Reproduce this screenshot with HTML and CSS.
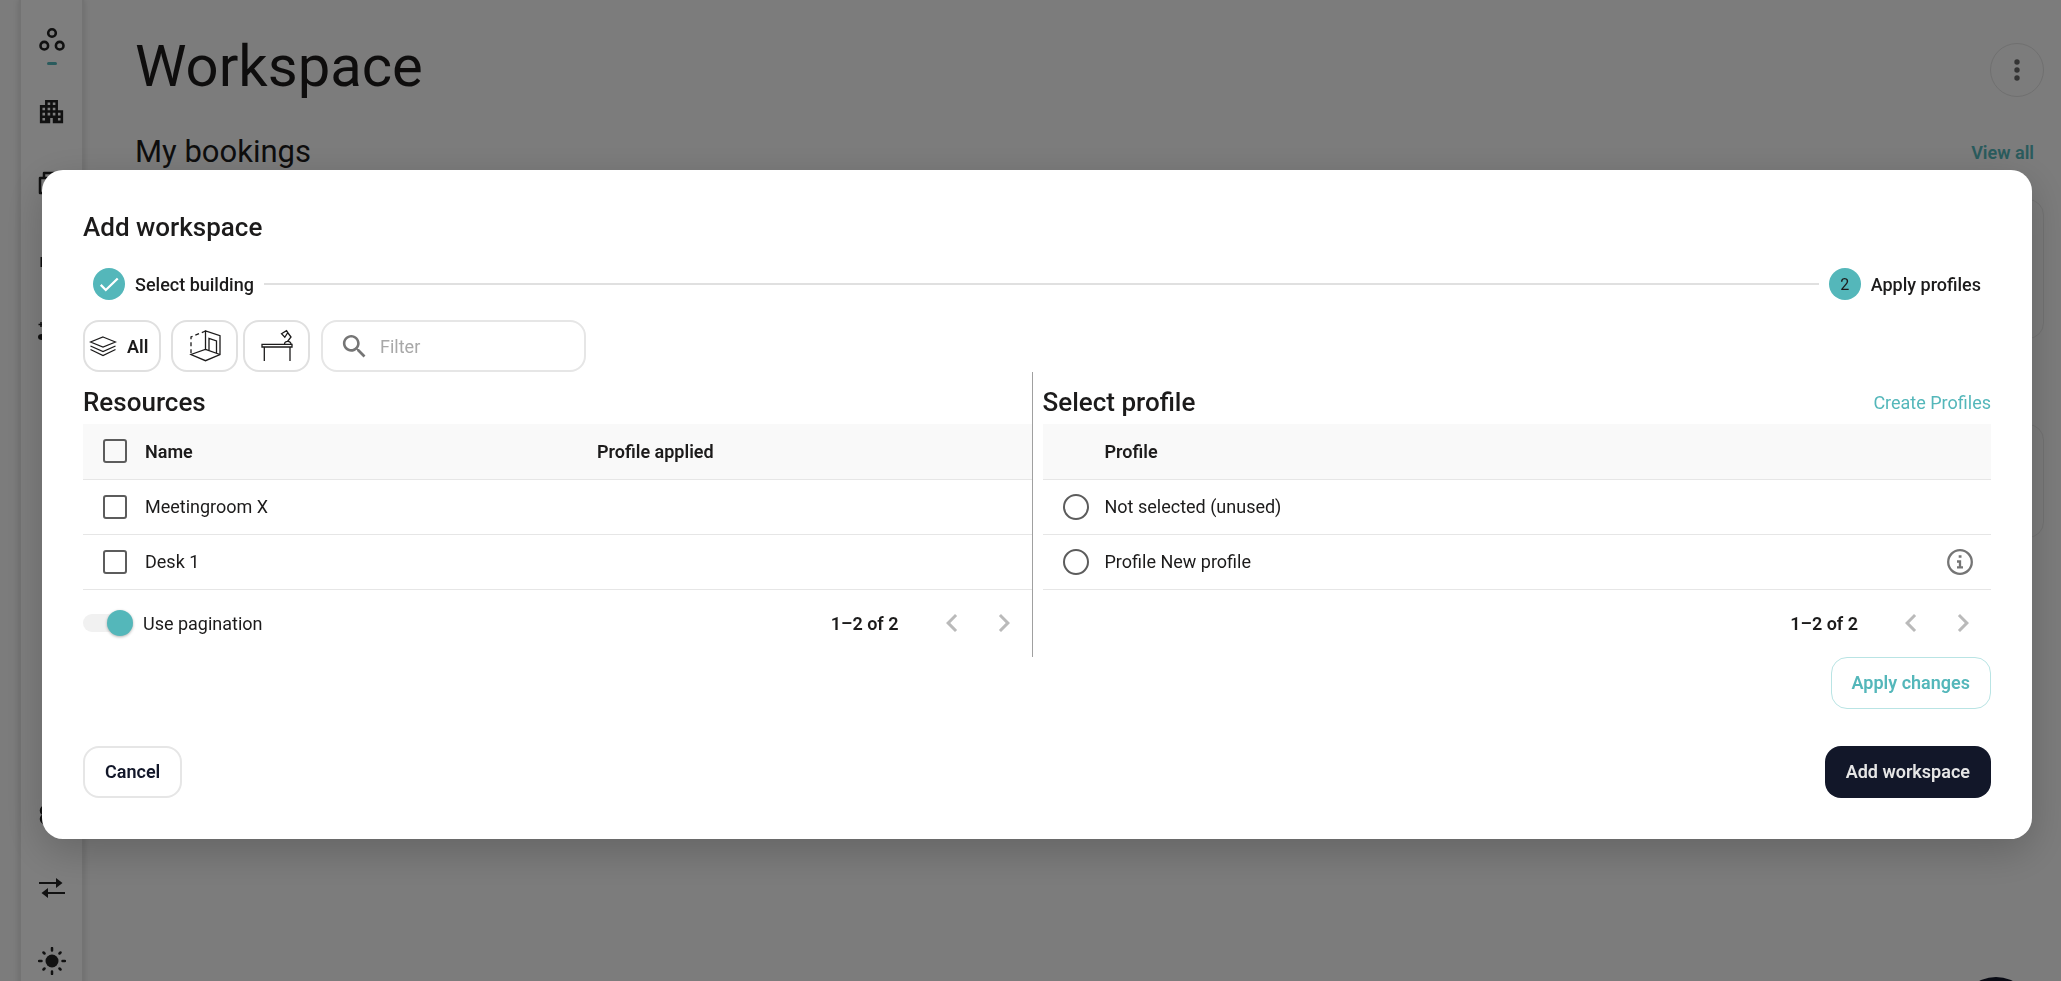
FILE: index.html
```html
<!DOCTYPE html>
<html lang="en">
<head>
  <meta charset="UTF-8" />
  <meta name="viewport" content="width=device-width, initial-scale=1" />
  <title>Workspace</title>
  <link rel="stylesheet" href="styles.css">
</head>
<body>
  <div class="app">
    <nav class="sidebar">
      <a href="#" class="nav-item active" aria-label="Workspace">
        <svg viewBox="0 0 28 28" fill="none" stroke="currentColor" stroke-width="2.600"><circle cx="14" cy="8" r="3.800"/><circle cx="6.300" cy="20.700" r="3.800"/><circle cx="21.700" cy="20.700" r="3.800"/></svg>
      </a>
      <a href="#" class="nav-item building" aria-label="Buildings">
        <svg viewBox="0 0 24 24" fill="currentColor"><path d="M17 11V3H7v4H3v14h8v-4h2v4h8V11h-4zM7 19H5v-2h2v2zm0-4H5v-2h2v2zm0-4H5V9h2v2zm4 4H9v-2h2v2zm0-4H9V9h2v2zm0-4H9V5h2v2zm4 8h-2v-2h2v2zm0-4h-2V9h2v2zm0-4h-2V5h2v2zm4 12h-2v-2h2v2zm0-4h-2v-2h2v2z"/></svg>
      </a>
      <a href="#" class="nav-item" aria-label="Bookings">
        <svg viewBox="0 0 28 28" fill="none" stroke="currentColor" stroke-width="2.500" stroke-linejoin="round"><path d="M6 6V2h20v16M2 22V7h20v15z"/></svg>
      </a>
      <a href="#" class="nav-item" aria-label="Meetings">
        <svg viewBox="0 0 28 28" fill="currentColor"><path d="M2.500 13h22v10h-22z"/></svg>
      </a>
      <a href="#" class="nav-item" aria-label="People">
        <svg viewBox="0 0 28 28" fill="currentColor"><path d="M3 5v5M.500 7.500h5" stroke="currentColor" stroke-width="1.500"/><ellipse cx="4" cy="20" rx="4" ry="3"/></svg>
      </a>
      <a href="#" class="nav-item push" aria-label="Settings">
        <svg viewBox="0 0 28 28" fill="none" stroke="currentColor" stroke-width="2.500"><circle cx="7" cy="9.500" r="4"/><circle cx="7" cy="18" r="4"/></svg>
      </a>
      <a href="#" class="nav-item" aria-label="Switch">
        <svg viewBox="0 0 28 28" fill="currentColor"><path d="M1 8h17V4l6.500 5-6.500 5v-4H1zM27 18H10v-4l-6.500 5 6.500 5v-4h17z"/></svg>
      </a>
      <a href="#" class="nav-item" aria-label="Light theme">
        <svg viewBox="0 0 28 28" fill="none" stroke="currentColor" stroke-width="2.500" stroke-linecap="round"><circle cx="14" cy="14" r="6.500" fill="currentColor" stroke="none"/><path d="M14 1v2.500M14 24.500V27M1 14h2.500M24.500 14H27M5.500 5.500l1 1M21.500 21.500l1 1M5.500 22.500l1-1M21.500 6.500l1-1"/></svg>
      </a>
    </nav>

    <main class="page">
      <header class="page-header">
        <h1>Workspace</h1>
        <button class="more-button" aria-label="More">
          <svg viewBox="0 0 32 32" fill="currentColor"><circle cx="16" cy="8" r="2.700"/><circle cx="16" cy="16" r="2.700"/><circle cx="16" cy="24" r="2.700"/></svg>
        </button>
      </header>
      <div class="section-header">
        <h2>My bookings</h2>
        <a href="#">View all</a>
      </div>
      <div class="card bookings"></div>
      <div class="card rooms"></div>
    </main>
    <button class="chat-button" aria-label="Chat"></button>
  </div>

  <div class="overlay">
    <div class="dialog" role="dialog" aria-labelledby="dialogTitle">
      <h2 class="dialog-title" id="dialogTitle">Add workspace</h2>

      <div class="stepper">
        <span class="step-icon">
          <svg viewBox="0 0 24 24" fill="none" stroke="#fff" stroke-width="2.500"><path d="M3 13l5.500 5.500L21.500 6"/></svg>
        </span>
        <span class="step-label">Select building</span>
        <span class="step-line"></span>
        <span class="step-icon">2</span>
        <span class="step-label">Apply profiles</span>
      </div>

      <div class="filters">
        <button class="filter-button all">
          <svg viewBox="0 0 28 24" fill="none" stroke="currentColor" stroke-width="1.300"><path d="M14 3l12.500 5L14 13 1.500 8zM1.500 12L14 17.500 26.500 12M1.500 15.500l12.500 6 12.500-6"/></svg>
          All
        </button>
        <button class="filter-button room" aria-label="Rooms">
          <svg viewBox="0 0 36 36" fill="none" stroke="currentColor" stroke-width="1.300"><path d="M18.500 21.300V3L33 7.700v18.800l-14.500 6.200L4 26.500zL33 26.500M22 22.500v-12l7.500 2.500v12"/><path d="M18.500 3L4 9v17.500" stroke-dasharray="4 3"/></svg>
        </button>
        <button class="filter-button desk" aria-label="Desks">
          <svg viewBox="0 0 36 36" fill="none" stroke="currentColor" stroke-width="1.300"><path d="M3 16.300h30v2.700H3zM5.300 19v14M31 19v14M22.500 5.700l5-3 1.300 1.800-3 4.800zM29 5l3 4-3.500 4.500M25.500 16.300a3.300 3 0 0 1 6.600 0"/></svg>
        </button>
        <label class="search">
          <svg viewBox="0 0 24 24" fill="currentColor"><path d="M15.500 14h-.79l-.28-.27C15.410 12.590 16 11.110 16 9.500 16 5.910 13.090 3 9.500 3S3 5.910 3 9.500 5.910 16 9.500 16c1.610 0 3.090-.59 4.230-1.570l.27.28v.79l5 4.990L20.490 19l-4.990-5zm-6 0C7.010 14 5 11.990 5 9.500S7.010 5 9.500 5 14 7.010 14 9.500 11.990 14 9.500 14z"/></svg>
          <input type="text" placeholder="Filter" aria-label="Filter" />
        </label>
      </div>

      <div class="columns">
        <section class="resources">
          <div class="column-header"><h3>Resources</h3></div>
          <table>
            <thead>
              <tr>
                <th class="pick"><input type="checkbox" aria-label="Select all" /></th>
                <th class="name">Name</th>
                <th>Profile applied</th>
              </tr>
            </thead>
            <tbody>
              <tr>
                <td class="pick"><input type="checkbox" id="room1" /></td>
                <td><label for="room1">Meetingroom X</label></td>
                <td></td>
              </tr>
              <tr>
                <td class="pick"><input type="checkbox" id="desk1" /></td>
                <td><label for="desk1">Desk 1</label></td>
                <td></td>
              </tr>
            </tbody>
          </table>
          <div class="pager">
            <label class="toggle"><input type="checkbox" checked /> Use pagination</label>
            <span class="range">1–2 of 2</span>
            <button class="page-button" aria-label="Previous page" disabled><svg viewBox="0 0 24 24" fill="currentColor"><path d="M15.410 7.410L14 6l-6 6 6 6 1.410-1.410L10.830 12z"/></svg></button>
            <button class="page-button" aria-label="Next page" disabled><svg viewBox="0 0 24 24" fill="currentColor"><path d="M10 6L8.590 7.410 13.170 12l-4.580 4.590L10 18l6-6z"/></svg></button>
          </div>
        </section>

        <section class="profiles">
          <div class="column-header">
            <h3>Select profile</h3>
            <a href="#">Create Profiles</a>
          </div>
          <table>
            <thead>
              <tr>
                <th class="pick"></th>
                <th>Profile</th>
                <th class="info"></th>
              </tr>
            </thead>
            <tbody>
              <tr>
                <td class="pick"><input type="radio" name="profile" id="profileNone" /></td>
                <td><label for="profileNone">Not selected (unused)</label></td>
                <td class="info"></td>
              </tr>
              <tr>
                <td class="pick"><input type="radio" name="profile" id="profileNew" /></td>
                <td><label for="profileNew">Profile New profile</label></td>
                <td class="info">
                  <button class="info-button" aria-label="Profile info">
                    <svg viewBox="0 0 26 26" fill="none" stroke="currentColor" stroke-width="2.300"><circle cx="13" cy="13" r="11.800"/><path d="M10 12.500h3v5.500M10 18.300h6M11.700 7.500h2.800"/></svg>
                  </button>
                </td>
              </tr>
            </tbody>
          </table>
          <div class="pager">
            <span class="range">1–2 of 2</span>
            <button class="page-button" aria-label="Previous page" disabled><svg viewBox="0 0 24 24" fill="currentColor"><path d="M15.410 7.410L14 6l-6 6 6 6 1.410-1.410L10.830 12z"/></svg></button>
            <button class="page-button" aria-label="Next page" disabled><svg viewBox="0 0 24 24" fill="currentColor"><path d="M10 6L8.590 7.410 13.170 12l-4.580 4.590L10 18l6-6z"/></svg></button>
          </div>
        </section>
      </div>

      <div class="apply-row">
        <button class="button outline">Apply changes</button>
      </div>
      <div class="actions">
        <button class="button plain">Cancel</button>
        <button class="button dark">Add workspace</button>
      </div>
    </div>
  </div>
</body>
</html>
```
FILE: styles.css
```css
* {
  box-sizing: border-box;
}

body {
  font-family: Roboto, sans-serif;
  font-size: 18px;
  color: #1c1b1b;
  background: #f8f8f8;
  margin: 0;
}

a {
  color: #54b7ba;
  text-decoration: none;
}

button, input {
  font: inherit;
  color: inherit;
  margin: 0;
}

button {
  padding: 0;
  border: none;
  background: none;
  cursor: pointer;
}

svg {
  display: block;
}

h1, h2, h3 {
  margin: 0;
}

/* page behind the dialog */
.app {
  position: relative;
  display: flex;
  align-items: flex-start;
  height: 100vh;
  overflow: hidden;
}

.sidebar {
  display: flex;
  flex-direction: column;
  flex-shrink: 0;
  width: 65px;
  height: calc(100vh + 16px);
  margin-left: 19px;
  padding-top: 2px;
  background: #fcfcfc;
  border: solid #e6e6e6;
  border-width: 0 2px;
  box-shadow: 0 0 6px rgba(0, 0, 0, 0.15);
}

.nav-item {
  position: relative;
  display: flex;
  align-items: center;
  justify-content: center;
  flex-shrink: 0;
  height: 73px;
  color: #222;
}

.nav-item svg {
  width: 28px;
  height: 28px;
}

.nav-item.building svg {
  width: 31px;
  height: 31px;
}

.nav-item.active::after {
  content: "";
  position: absolute;
  bottom: 10px;
  width: 10px;
  height: 3px;
  border-radius: 2px;
  background: #54b7ba;
}

.nav-item.push {
  margin-top: auto;
}

.page {
  flex: 1;
  padding: 28px 17px 0 51px;
}

.page-header {
  display: flex;
  align-items: flex-start;
  justify-content: space-between;
}

.page-header h1 {
  font-size: 58px;
  font-weight: 400;
  line-height: 76px;
}

.more-button {
  width: 54px;
  height: 54px;
  margin-top: 15px;
  padding: 10px;
  border: 1px solid #e0e0e0;
  border-radius: 50%;
  color: #666;
}

.section-header {
  display: flex;
  align-items: center;
  justify-content: space-between;
  margin-top: 28px;
  padding-right: 10px;
}

.section-header h2 {
  font-size: 31px;
  font-weight: 400;
  line-height: 40px;
}

.section-header a {
  font-weight: 600;
}

.card {
  border: 1px solid #e6e6e6;
  border-radius: 16px;
}

.bookings {
  height: 140px;
  margin-top: 27px;
}

.rooms {
  height: 114px;
  margin-top: 85px;
}

.chat-button {
  position: absolute;
  right: 28px;
  bottom: -70px;
  width: 74px;
  height: 74px;
  border-radius: 50%;
  background: #121729;
}

/* dialog */
.overlay {
  position: fixed;
  inset: 0;
  padding: 170px 29px 0 42px;
  background: rgba(0, 0, 0, 0.5);
}

.dialog {
  padding: 41px;
  border-radius: 21px;
  background: #fff;
  box-shadow: 0 12px 40px rgba(0, 0, 0, 0.2);
}

.dialog-title {
  font-size: 26px;
  font-weight: 500;
  line-height: 32px;
}

.stepper {
  display: flex;
  align-items: center;
  gap: 10px;
  margin-top: 25px;
  padding: 0 10px;
}

.step-icon {
  display: flex;
  align-items: center;
  justify-content: center;
  width: 32px;
  height: 32px;
  border-radius: 50%;
  background: #54b7ba;
  font-size: 16px;
}

.step-icon svg {
  width: 22px;
}

.step-label {
  font-weight: 500;
}

.step-line {
  flex: 1;
  height: 2px;
  background: #e0e0e0;
}

.filters {
  display: flex;
  align-items: center;
  margin-top: 20px;
}

.filter-button {
  display: flex;
  align-items: center;
  justify-content: center;
  height: 52px;
  border: 2px solid #e0e0e0;
  border-radius: 16px;
}

.filter-button.all {
  justify-content: flex-start;
  gap: 10px;
  width: 78px;
  margin-right: 10px;
  padding-left: 4px;
  font-weight: 600;
}

.filter-button.all svg {
  width: 28px;
}

.filter-button.room,
.filter-button.desk {
  width: 67px;
  margin-right: 5px;
}

.filter-button.room svg,
.filter-button.desk svg {
  width: 36px;
}

.search {
  display: flex;
  align-items: center;
  gap: 10px;
  width: 265px;
  height: 52px;
  margin-left: 6px;
  padding: 0 16px;
  border: 2px solid #e6e6e6;
  border-radius: 16px;
}

.search svg {
  flex-shrink: 0;
  width: 31px;
  color: #757575;
}

.search input {
  min-width: 0;
  padding: 0;
  border: none;
  outline: none;
  background: none;
}

.search input::placeholder {
  color: #a8a8a8;
}

.columns {
  display: flex;
}

.resources,
.profiles {
  flex: 1;
}

.resources {
  border-right: 1px solid #a0a0a0;
}

.profiles {
  margin-left: 10px;
}

.column-header {
  display: flex;
  align-items: center;
  justify-content: space-between;
  height: 52px;
  padding-top: 8px;
}

.column-header h3 {
  font-size: 26px;
  font-weight: 500;
}

table {
  width: 100%;
  border-collapse: collapse;
}

th, td {
  height: 55px;
  padding: 0;
  border-bottom: 1px solid #e6e6e6;
  text-align: left;
}

th {
  background: #f9f9f9;
  font-weight: 600;
}

.pick {
  width: 62px;
  padding-left: 20px;
}

.name {
  width: 452px;
}

.info {
  width: 60px;
  padding-right: 18px;
}

table input {
  appearance: none;
  display: block;
  width: 24px;
  height: 24px;
  border: 2px solid #5c5c5c;
  border-radius: 3px;
}

table input[type="radio"] {
  width: 26px;
  height: 26px;
  border-radius: 50%;
}

.info-button {
  display: block;
  margin-left: auto;
  color: #757575;
}

.info-button svg {
  width: 26px;
}

.pager {
  display: flex;
  align-items: center;
  justify-content: flex-end;
  height: 67px;
  padding-right: 10px;
}

.range {
  margin-right: 35px;
  font-weight: 600;
}

.page-button {
  margin-left: 16px;
  color: #bababa;
}

.page-button svg {
  width: 36px;
}

.range + .page-button {
  margin-left: 0;
}

.toggle {
  display: flex;
  align-items: center;
  gap: 10px;
  margin-right: auto;
}

.toggle input {
  appearance: none;
  display: flex;
  align-items: center;
  justify-content: flex-end;
  position: relative;
  width: 50px;
  height: 18px;
  background: #f1f1f1;
  border-radius: 9px;
}

.toggle input::after {
  content: "";
  flex-shrink: 0;
  width: 26px;
  height: 26px;
  border-radius: 50%;
  background: #54b7ba;
  box-shadow: 0 1px 3px rgba(0, 0, 0, 0.3);
}

.button {
  height: 52px;
  padding: 0 20px;
  border: 1px solid transparent;
  border-radius: 16px;
  font-weight: 600;
}

.outline {
  border-color: #b9e4e4;
  color: #54b7ba;
}

.plain {
  border: 2px solid #e6e6e6;
  color: #121729;
}

.dark {
  background: #121729;
  color: #e6e6e6;
}

.apply-row {
  display: flex;
  justify-content: flex-end;
}

.actions {
  display: flex;
  justify-content: space-between;
  margin-top: 37px;
}
```
